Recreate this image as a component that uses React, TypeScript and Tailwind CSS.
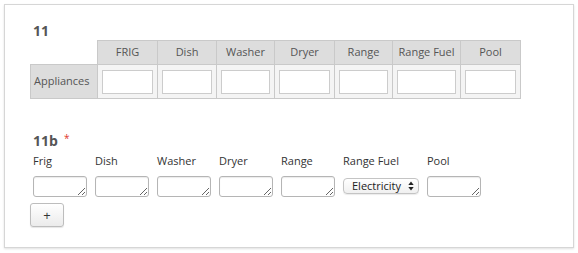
import React from "react";

const cols = [
  { name: "FRIG", w: "w-[60px]" },
  { name: "Dish", w: "w-[59px]" },
  { name: "Washer", w: "w-[58px]" },
  { name: "Dryer", w: "w-[60px]" },
  { name: "Range", w: "w-[58px]" },
  { name: "Range Fuel", w: "w-[68px]" },
  { name: "Pool", w: "w-[60px]" },
];

function TA() {
  return (
    <textarea
      rows={1}
      className="block w-[54px] h-[21px] resize border border-[#b5b5b5] rounded-[3px] bg-white shadow-[inset_0_1px_1px_rgba(0,0,0,0.08)] outline-none"
    />
  );
}

export default function App() {
  return (
    <div
      className="w-[578px] h-[253px] bg-white pt-[4px] pl-[4px] text-[#333]"
      style={{ fontFamily: '"Open Sans", "DejaVu Sans", sans-serif' }}
    >
      <div className="w-[570px] h-[244px] border border-[#d6d6d6] shadow-[0_1px_2px_rgba(0,0,0,0.12)] bg-white pl-[25px] pt-[17px]">
        <h2 className="pl-[3px] text-[14px] leading-[18px] font-bold text-[#555]">11</h2>
        <table className="border-collapse table-fixed text-[11px] text-[#555]">
          <thead>
            <tr>
              <th className="w-[67px] p-0"></th>
              {cols.map((c) => (
                <th
                  key={c.name}
                  className={`${c.w} h-[24px] p-0 border border-[#c9c9c9] bg-[#dddddd] font-normal text-center`}
                >
                  {c.name}
                </th>
              ))}
            </tr>
          </thead>
          <tbody>
            <tr>
              <td className="h-[34px] pl-[3px] border border-[#c9c9c9] bg-[#dddddd] text-left">Appliances</td>
              {cols.map((c) => (
                <td key={c.name} className="px-[4px] py-0 border border-[#c9c9c9] bg-[#f4f4f4]">
                  <input
                    type="text"
                    className="block w-full h-[24px] border border-[#cccccc] bg-white outline-none"
                  />
                </td>
              ))}
            </tr>
          </tbody>
        </table>

        <h2 className="mt-[33px] pl-[3px] text-[14px] leading-[18px] font-bold text-[#555] flex items-start">
          11b<span className="ml-[6px] text-[10px] leading-[12px] text-[#e0352b] font-normal">*</span>
        </h2>
        <div className="pl-[3px] mt-[3px] flex gap-[8px] items-start text-[11px] text-[#333]">
          {["Frig", "Dish", "Washer", "Dryer", "Range"].map((l) => (
            <div key={l} className="flex flex-col">
              <label className="leading-[16px] h-[23px]">{l}</label>
              <TA />
            </div>
          ))}
          <div className="flex flex-col">
            <label className="leading-[16px] h-[23px]">Range Fuel</label>
            <div className="relative w-[76px] h-[16px] mt-[2px]">
              <select
                defaultValue="Electricity"
                className="appearance-none w-full h-full border border-[#c4c4c4] rounded-[4px] bg-gradient-to-b from-white to-[#f0f0f0] pl-[8px] text-[11px] leading-[14px] text-[#222] shadow-[0_1px_1px_rgba(0,0,0,0.08)] outline-none"
              >
                <option>Electricity</option>
                <option>Gas</option>
              </select>
              <svg
                className="absolute right-[5px] top-[3px] pointer-events-none"
                width="6"
                height="10"
                viewBox="0 0 6 10"
              >
                <path d="M3 0.5 L5.7 4 H0.3 Z" fill="#222" />
                <path d="M3 9.5 L5.7 6 H0.3 Z" fill="#222" />
              </svg>
            </div>
          </div>
          <div className="flex flex-col">
            <label className="leading-[16px] h-[23px]">Pool</label>
            <TA />
          </div>
        </div>
        <button className="mt-[6px] w-[34px] h-[24px] border border-[#bdbdbd] rounded-[3px] bg-gradient-to-b from-white to-[#ebebeb] shadow-[0_1px_1px_rgba(0,0,0,0.1)] text-[13px] leading-[20px] text-[#333]">
          +
        </button>
      </div>
    </div>
  );
}
